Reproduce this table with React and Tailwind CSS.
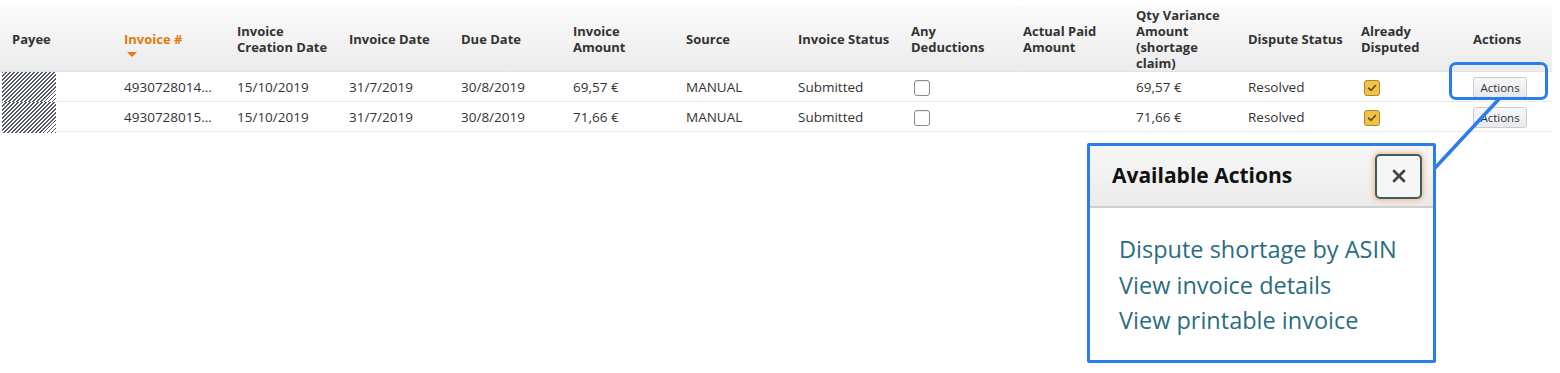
import React from 'react'

const COLS = 'grid grid-cols-[112px_113px_112px_112px_112px_113px_112px_113px_112px_113px_112px_113px_112px_89px]'

const HEADERS = [
  'Payee',
  'Invoice #',
  'Invoice Creation Date',
  'Invoice Date',
  'Due Date',
  'Invoice Amount',
  'Source',
  'Invoice Status',
  'Any Deductions',
  'Actual Paid Amount',
  'Qty Variance Amount (shortage claim)',
  'Dispute Status',
  'Already Disputed',
  'Actions',
]

const HEADER_WIDTHS = {
  'Invoice Creation Date': 'w-[92px]',
  'Invoice Amount': 'w-[60px]',
  'Any Deductions': 'w-[80px]',
  'Actual Paid Amount': 'w-[80px]',
  'Qty Variance Amount (shortage claim)': 'w-[92px]',
  'Already Disputed': 'w-[70px]',
}

const ROWS = [
  { invoice: '4930728014...', created: '15/10/2019', date: '31/7/2019', due: '30/8/2019', amount: '69,57 €', qty: '69,57 €' },
  { invoice: '4930728015...', created: '15/10/2019', date: '31/7/2019', due: '30/8/2019', amount: '71,66 €', qty: '71,66 €' },
]

function EmptyBox() {
  return <div className="w-[16px] h-[16px] rounded-[3px] border border-[#8a8a8a] bg-white shadow-[inset_0_1px_1px_rgba(0,0,0,0.08)]" />
}

function CheckedBox() {
  return (
    <div className="w-[16px] h-[16px] rounded-[3px] border border-[#a88734] bg-[#f3c242] flex items-center justify-center">
      <svg width="10" height="8" viewBox="0 0 10 8" fill="none">
        <path d="M1.5 4.2 L4 6.3 L8.5 1.5" stroke="#5a4a1e" strokeWidth="1.6" strokeLinecap="round" strokeLinejoin="round" />
      </svg>
    </div>
  )
}

function ActionsButton() {
  return (
    <button className="h-[21px] w-[54px] rounded-[3px] border border-[#c9cbcf] bg-gradient-to-b from-[#f7f8fa] to-[#e7e9ec] text-[11.5px] text-[#333] leading-none">
      Actions
    </button>
  )
}

function Table() {
  return (
    <div className="pt-[5px]">
      <div className={`${COLS} grid-rows-[67px] h-[67px] bg-gradient-to-b from-[#fbfbfb] to-[#ececec] border-b border-[#e3e3e3] text-[13px] font-bold text-[#333] leading-[16px]`}>
        {HEADERS.map(h => (
          <div key={h} className="pl-3 flex items-center">
            {h === 'Invoice #' ? (
              <span className="relative text-[#e47911]">
                Invoice #
                <span className="absolute left-[3px] top-[21px] w-0 h-0 border-l-[5px] border-r-[5px] border-t-[5px] border-l-transparent border-r-transparent border-t-[#e47911]" />
              </span>
            ) : (
              <span className={HEADER_WIDTHS[h] || ''}>{h}</span>
            )}
          </div>
        ))}
      </div>
      {ROWS.map((r, i) => (
        <div key={i} className={`${COLS} h-[30px] border-b border-[#e9e9e9] text-[13.5px] text-[#333] items-center`}>
          <div className="h-full flex items-center">
            <div className="ml-[2px] h-[31px] w-[54px] bg-[repeating-linear-gradient(135deg,#525865_0px,#525865_1.2px,#ffffff_1.2px,#ffffff_2.8px)]" />
          </div>
          <div className="pl-3">{r.invoice}</div>
          <div className="pl-3">{r.created}</div>
          <div className="pl-3">{r.date}</div>
          <div className="pl-3">{r.due}</div>
          <div className="pl-3">{r.amount}</div>
          <div className="pl-3">MANUAL</div>
          <div className="pl-3">Submitted</div>
          <div className="pl-[15px]"><EmptyBox /></div>
          <div className="pl-3"></div>
          <div className="pl-3">{r.qty}</div>
          <div className="pl-3">Resolved</div>
          <div className="pl-[15px]"><CheckedBox /></div>
          <div className="pl-3 flex"><ActionsButton /></div>
        </div>
      ))}
    </div>
  )
}

function Popup() {
  return (
    <div className="absolute left-[1087px] top-[143px] w-[349px] h-[220px] border-[3px] border-[#2b7de9] rounded-[2px] bg-white">
      <div className="h-[62px] bg-gradient-to-b from-[#f7f7f7] to-[#ebebeb] border-b-2 border-[#cfcfcf] flex items-center justify-between pl-[22px] pr-[11px]">
        <span className="text-[21px] font-bold text-[#111]">Available Actions</span>
        <button className="w-[47px] h-[45px] rounded-[5px] border-2 border-[#3c5d66] bg-[#f5f6f6] shadow-[0_0_4px_2px_rgba(240,160,90,0.55)] flex items-center justify-center">
          <svg width="16" height="16" viewBox="0 0 16 16">
            <path d="M3 3 L13 13 M13 3 L3 13" stroke="#444" strokeWidth="2.8" strokeLinecap="round" />
          </svg>
        </button>
      </div>
      <div className="pl-[29px] pt-[24px] flex flex-col text-[23.5px] leading-[35.5px] text-[#2a6d7f]">
        <a>Dispute shortage by ASIN</a>
        <a>View invoice details</a>
        <a>View printable invoice</a>
      </div>
    </div>
  )
}

export default function App() {
  return (
    <div className="relative w-[1560px] h-[373px] bg-white overflow-hidden font-['Open_Sans',sans-serif]">
      <div className="w-[1552px]">
        <Table />
      </div>
      <div className="absolute left-[1449px] top-[62px] w-[99px] h-[38px] border-[3px] border-[#2b7de9] rounded-[7px]" />
      <svg className="absolute left-0 top-0 pointer-events-none" width="1560" height="373">
        <line x1="1499" y1="99" x2="1434" y2="169" stroke="#2b7de9" strokeWidth="3.5" />
      </svg>
      <Popup />
    </div>
  )
}
